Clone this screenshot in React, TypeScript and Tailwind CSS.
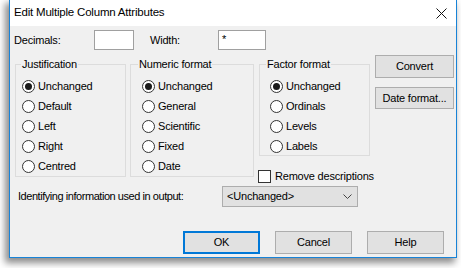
import React from 'react'

const font = { fontFamily: '"Liberation Sans", Arial, sans-serif' }

function Radio({ label, checked }: { label: string; checked?: boolean }) {
  return (
    <div className="flex h-[20px] items-center gap-[3px]">
      <span className="flex size-[13px] items-center justify-center rounded-full border border-[#333333] bg-white">
        {checked && <span className="size-[7px] rounded-full bg-[#1a1a1a]" />}
      </span>
      <span>{label}</span>
    </div>
  )
}

function Group({
  title,
  items,
  width,
  height,
  pad,
  titlePad,
}: {
  title: string
  items: string[]
  width: string
  height: string
  pad: string
  titlePad: string
}) {
  return (
    <div className={`mt-[9px] border border-[#dcdcdc] ${width} ${height}`}>
      <div className={`-mt-[8px] w-fit bg-[#f0f0f0] px-[1px] leading-[14px] ${titlePad}`}>{title}</div>
      <div className={`mt-[5px] ${pad}`}>
        {items.map((it, i) => (
          <Radio key={it} label={it} checked={i === 0} />
        ))}
      </div>
    </div>
  )
}

function Button({ children, focus }: { children: React.ReactNode; focus?: boolean }) {
  return (
    <div
      className={`flex h-[23px] w-[77px] items-center justify-center bg-[#e1e1e1] ${
        focus ? 'border-2 border-[#0078d7]' : 'border border-[#adadad]'
      }`}
    >
      {children}
    </div>
  )
}

export default function App() {
  return (
    <div
      className="h-[268px] w-[461px] overflow-hidden bg-white text-[11px] tracking-[-0.2px] text-black"
      style={font}
    >
      <div className="ml-[9px] flex h-[258px] w-[448px] flex-col border-x border-b border-[#1883d7] shadow-[-3px_4px_7px_1px_rgba(0,0,0,0.45)]">
        <header className="flex h-[26px] shrink-0 items-center justify-between bg-white pl-[4px] pr-[8px]">
          <span className="text-[11.5px] tracking-[-0.2px]">Edit Multiple Column Attributes</span>
          <svg width="11" height="11" viewBox="0 0 11 11" className="mr-[1px]">
            <path d="M0.5 0.5 L10.5 10.5 M10.5 0.5 L0.5 10.5" stroke="#111" strokeWidth="1" />
          </svg>
        </header>

        <div className="flex flex-1 flex-col bg-[#f0f0f0]">
          <section className="mt-[4px] flex h-[20px] items-center pl-[4px]">
            <span className="w-[80px]">Decimals:</span>
            <span className="h-[20px] w-[40px] border border-[#a0a0a0] bg-white" />
            <span className="ml-[16px] w-[68px]">Width:</span>
            <span className="flex h-[20px] w-[48px] items-start border border-[#a0a0a0] bg-white pl-[3px] pt-[1px] leading-[14px]">
              *
            </span>
          </section>

          <section className="mt-[5px] flex h-[122px] items-start pl-[5px]">
            <Group
              title="Justification"
              items={['Unchanged', 'Default', 'Left', 'Right', 'Centred']}
              width="w-[111px]"
              height="h-[113px]"
              pad="pl-[6px]"
              titlePad="ml-[5px]"
            />
            <div className="ml-[4px]">
              <Group
                title="Numeric format"
                items={['Unchanged', 'General', 'Scientific', 'Fixed', 'Date']}
                width="w-[124px]"
                height="h-[113px]"
                pad="pl-[11px]"
                titlePad="ml-[7px]"
              />
            </div>
            <div className="ml-[5px] flex w-[111px] flex-col">
              <Group
                title="Factor format"
                items={['Unchanged', 'Ordinals', 'Levels', 'Labels']}
                width="w-[111px]"
                height="h-[92px]"
                pad="pl-[10px]"
                titlePad="ml-[6px]"
              />
              <div className="-ml-[1px] mt-[12px] flex items-center gap-[4px] whitespace-nowrap">
                <span className="size-[13px] shrink-0 border border-[#333333] bg-white" />
                <span>Remove descriptions</span>
              </div>
            </div>
            <div className="ml-[5px] flex flex-col gap-[9px]">
              <div className="flex h-[23px] w-[79px] items-center justify-center border border-[#adadad] bg-[#e1e1e1]">
                Convert
              </div>
              <div className="flex h-[22px] w-[79px] items-center justify-center border border-[#adadad] bg-[#e1e1e1]">
                Date format...
              </div>
            </div>
          </section>

          <section className="mt-[9px] flex h-[21px] items-center pl-[8px]">
            <span className="w-[204px] tracking-[-0.45px]">Identifying information used in output:</span>
            <div className="flex h-[21px] w-[136px] items-center justify-between border border-[#adadad] bg-[#e1e1e1] pl-[4px] pr-[5px]">
              <span>&lt;Unchanged&gt;</span>
              <svg width="9" height="5" viewBox="0 0 9 5">
                <path d="M0.5 0.5 L4.5 4.5 L8.5 0.5" fill="none" stroke="#444" strokeWidth="1" />
              </svg>
            </div>
          </section>

          <section className="mt-[24px] flex gap-[15px] pl-[173px]">
            <Button focus>OK</Button>
            <Button>Cancel</Button>
            <Button>Help</Button>
          </section>
        </div>
      </div>
    </div>
  )
}
